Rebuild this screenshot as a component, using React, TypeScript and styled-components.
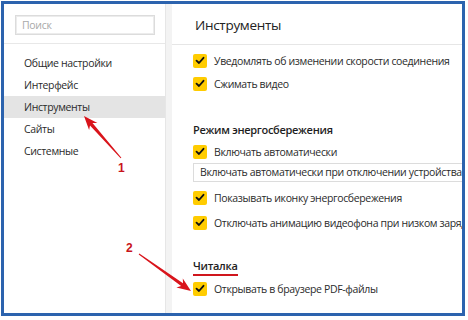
import React from "react";
import styled, { createGlobalStyle } from "styled-components";

const Global = createGlobalStyle`
  html, body { margin: 0; padding: 0; background: #fff; }
  body { font-family: "Open Sans", "Noto Sans", sans-serif; color: #2b2b2b; }
`;

const Page = styled.div`
  position: relative;
  width: 468px;
  height: 320px;
  overflow: hidden;
  background: #fff;
`;

const Frame = styled.div`
  box-sizing: border-box;
  margin: 1px 0 0 1px;
  width: 464px;
  height: 315px;
  border: 3px solid #2c63ae;
  display: grid;
  grid-template-columns: 161px 7px 1fr;
  overflow: hidden;
`;

const Sidebar = styled.aside`
  background: #fff;
  display: flex;
  flex-direction: column;
`;

const SearchBox = styled.div`
  box-sizing: border-box;
  margin: 11px 0 0 11px;
  width: 140px;
  height: 20px;
  border: 1px solid #dcdcdc;
  box-shadow: inset 0 0 0 1px #ececec;
  padding-left: 6px;
  font-size: 10.5px;
  letter-spacing: -0.3px;
  line-height: 18px;
  color: #a9a9a9;
`;

const SideRule = styled.div`
  margin-top: 8px;
  height: 1px;
  background: #e8e8e8;
`;

const NavList = styled.nav`
  margin-top: 8px;
  display: flex;
  flex-direction: column;
`;

const NavItem = styled.div<{ $active?: boolean }>`
  height: 22px;
  line-height: 22px;
  padding-left: 20px;
  font-size: 10.5px;
  letter-spacing: -0.35px;
  background: ${(p) => (p.$active ? "#e4e4e4" : "transparent")};
`;

const Gutter = styled.div`
  background: #f3f3f3;
  border-left: 1px solid #e6e6e6;
`;

const Main = styled.main`
  background: #fff;
  display: flex;
  flex-direction: column;
  min-width: 0;
`;

const Header = styled.div`
  height: 41px;
  box-sizing: border-box;
  border-bottom: 1px solid #e6e6e6;
  padding-left: 23px;
  font-size: 13.5px;
  letter-spacing: -0.3px;
  line-height: 42px;
  color: #222;
`;

const Content = styled.div`
  padding-left: 21px;
  display: flex;
  flex-direction: column;
`;

const Row = styled.div<{ $mt?: number }>`
  display: flex;
  align-items: center;
  height: 23px;
  margin-top: ${(p) => p.$mt ?? 0}px;
  white-space: nowrap;
  font-size: 10.5px;
  letter-spacing: -0.35px;
`;

const Box = styled.span`
  flex: none;
  width: 14px;
  height: 14px;
  border-radius: 2px;
  background: #ffcc00;
  display: flex;
  align-items: center;
  justify-content: center;
  margin-right: 7px;
`;

const SectionTitle = styled.div<{ $mt: number; $underline?: boolean }>`
  margin-top: ${(p) => p.$mt}px;
  height: 16px;
  line-height: 16px;
  font-size: 11px;
  letter-spacing: -0.3px;
  font-weight: 600;
  color: #1e1e1e;
  align-self: flex-start;
  border-bottom: ${(p) => (p.$underline ? "2px solid #d0161d" : "none")};
`;

const Select = styled.div`
  box-sizing: border-box;
  height: 19px;
  margin-right: -4px;
  border: 1px solid #dcdcdc;
  padding-left: 6px;
  font-size: 10.5px;
  letter-spacing: -0.35px;
  line-height: 17px;
  white-space: nowrap;
  overflow: hidden;
`;

const Overlay = styled.svg`
  position: absolute;
  left: 0;
  top: 0;
  pointer-events: none;
`;

const Check = () => (
  <svg width="10" height="9" viewBox="0 0 10 9">
    <path d="M1.5 4.6 L4 7 L8.5 1.8" fill="none" stroke="#111" strokeWidth="1.8" strokeLinecap="round" strokeLinejoin="round" />
  </svg>
);

const Option = ({ text, mt }: { text: string; mt?: number }) => (
  <Row $mt={mt}>
    <Box>
      <Check />
    </Box>
    {text}
  </Row>
);

function arrow(x1: number, y1: number, x2: number, y2: number) {
  const dx = x2 - x1;
  const dy = y2 - y1;
  const L = Math.hypot(dx, dy);
  const ux = dx / L;
  const uy = dy / L;
  const nx = -uy;
  const ny = ux;
  const headLen = 14;
  const headW = 11;
  const shaftW = 3.4;
  const tailW = 1;
  const bx = x2 - ux * headLen;
  const by = y2 - uy * headLen;
  const nb = (x: number, y: number, w: number) => [
    [x + nx * w / 2, y + ny * w / 2],
    [x - nx * w / 2, y - ny * w / 2],
  ];
  const [t1, t2] = nb(x1, y1, tailW);
  const [s1, s2] = nb(bx + ux * 3, by + uy * 3, shaftW);
  const [h1, h2] = nb(bx, by, headW);
  const pts = [t1, s1, h1, [x2, y2], h2, s2, t2];
  return pts.map((p) => p.map((v) => v.toFixed(1)).join(",")).join(" ");
}

const Label = styled.text`
  font-family: "Liberation Sans", Arial, sans-serif;
  font-weight: 700;
  font-size: 12px;
  fill: #c8141b;
`;

export default function App() {
  return (
    <Page>
      <Global />
      <Frame>
        <Sidebar>
          <SearchBox>Поиск</SearchBox>
          <SideRule />
          <NavList>
            <NavItem>Общие настройки</NavItem>
            <NavItem>Интерфейс</NavItem>
            <NavItem $active>Инструменты</NavItem>
            <NavItem>Сайты</NavItem>
            <NavItem>Системные</NavItem>
          </NavList>
        </Sidebar>
        <Gutter />
        <Main>
          <Header>Инструменты</Header>
          <Content>
            <Option mt={4} text="Уведомлять об изменении скорости соединения" />
            <Option text="Сжимать видео" />
            <SectionTitle $mt={27}>Режим энергосбережения</SectionTitle>
            <Option mt={2} text="Включать автоматически" />
            <Select>Включать автоматически при отключении устройства от сети</Select>
            <Option mt={4} text="Показывать иконку энергосбережения" />
            <Option mt={2} text="Отключать анимацию видеофона при низком заряде батареи" />
            <SectionTitle $mt={24} $underline>Читалка</SectionTitle>
            <Option mt={1} text="Открывать в браузере PDF-файлы" />
          </Content>
        </Main>
      </Frame>
      <Overlay width="468" height="320" viewBox="0 0 468 320">
        <polygon points={arrow(121, 158, 84, 116)} fill="#d9141b" />
        <polygon points={arrow(139, 254, 191, 291)} fill="#d9141b" />
        <Label x="118" y="172">1</Label>
        <Label x="126" y="252">2</Label>
      </Overlay>
    </Page>
  );
}
